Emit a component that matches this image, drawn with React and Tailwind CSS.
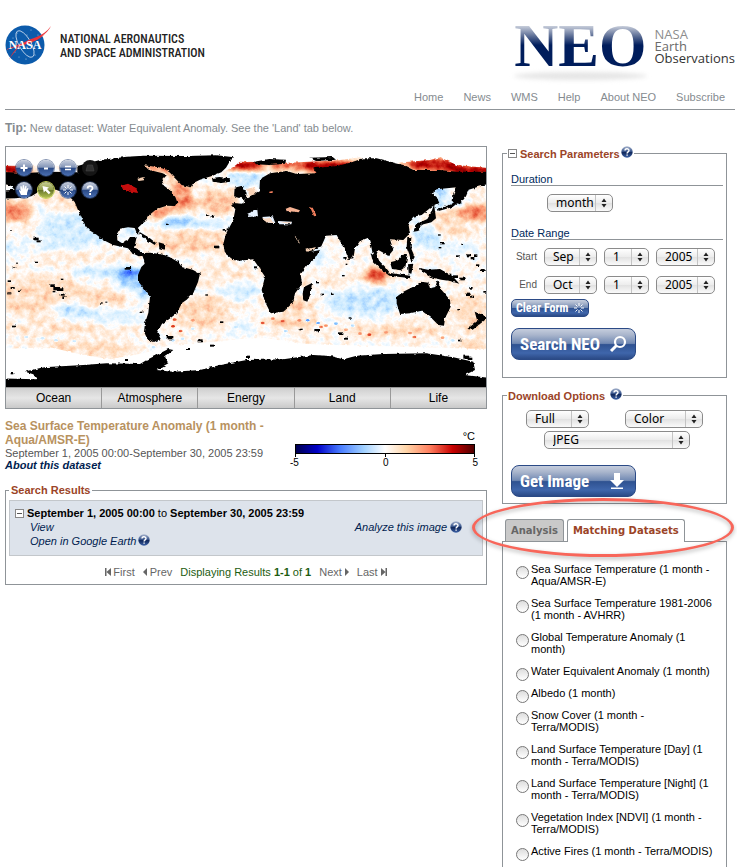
import React, { useState } from "react";

const navLinks = ["Home", "News", "WMS", "Help", "About NEO", "Subscribe"];
const categories = ["Ocean", "Atmosphere", "Energy", "Land", "Life"];
const months = ["Jan", "Feb", "Mar", "Apr", "May", "Jun", "Jul", "Aug", "Sep", "Oct", "Nov", "Dec"];
const days = Array.from({ length: 31 }, (_, i) => String(i + 1));
const years = ["2002", "2003", "2004", "2005", "2006", "2007"];

const datasets = [
  "Sea Surface Temperature (1 month - Aqua/AMSR-E)",
  "Sea Surface Temperature 1981-2006 (1 month - AVHRR)",
  "Global Temperature Anomaly (1 month)",
  "Water Equivalent Anomaly (1 month)",
  "Albedo (1 month)",
  "Snow Cover (1 month - Terra/MODIS)",
  "Land Surface Temperature [Day] (1 month - Terra/MODIS)",
  "Land Surface Temperature [Night] (1 month - Terra/MODIS)",
  "Vegetation Index [NDVI] (1 month - Terra/MODIS)",
  "Active Fires (1 month - Terra/MODIS)",
];

// anomaly field: cx, cy, rx, ry, grey level (80 = neutral, higher = warmer)
const anomalies = [
  [20, 195, 70, 28, "#b8b8b8"],
  [170, 165, 110, 30, "#929292"],
  [210, 250, 110, 55, "#6a6a6a"],
  [60, 300, 90, 25, "#747474"],
  [110, 190, 40, 20, "#747474"],
  [250, 340, 160, 16, "#8e8e8e"],
  [300, 372, 110, 16, "#606060"],
  [375, 385, 40, 24, "#282828"],
  [395, 425, 66, 34, "#606060"],
  [110, 450, 150, 60, "#949494"],
  [300, 450, 90, 22, "#959595"],
  [195, 488, 60, 20, "#5e5e5e"],
  [310, 510, 110, 24, "#707070"],
  [180, 545, 190, 18, "#909090"],
  [250, 605, 150, 20, "#989898"],
  [470, 68, 60, 16, "#b8b8b8"],
  [520, 150, 40, 50, "#b0b0b0"],
  [545, 165, 24, 18, "#bcbcbc"],
  [640, 165, 60, 34, "#a2a2a2"],
  [460, 198, 30, 12, "#cccccc"],
  [515, 225, 55, 18, "#484848"],
  [620, 232, 70, 18, "#6c6c6c"],
  [560, 285, 130, 34, "#999999"],
  [370, 255, 30, 14, "#626262"],
  [660, 380, 90, 30, "#8c8c8c"],
  [700, 430, 60, 30, "#707070"],
  [590, 480, 90, 24, "#999999"],
  [600, 525, 100, 14, "#9e9e9e"],
  [700, 540, 50, 14, "#666666"],
  [720, 92, 60, 28, "#646464"],
  [720, 54, 60, 12, "#ffffff"],
  [20, 66, 60, 14, "#ffffff"],
  [870, 52, 100, 16, "#c8c8c8"],
  [980, 60, 90, 16, "#ffffff"],
  [1280, 52, 90, 18, "#eeeeee"],
  [1400, 70, 80, 14, "#ffffff"],
  [930, 330, 30, 34, "#6c6c6c"],
  [1010, 400, 80, 30, "#8a8a8a"],
  [1080, 465, 130, 44, "#666666"],
  [1114, 385, 34, 18, "#dcdcdc"],
  [875, 475, 40, 16, "#a4a4a4"],
  [1210, 215, 30, 14, "#6c6c6c"],
  [1400, 195, 60, 26, "#b8b8b8"],
  [1320, 205, 50, 14, "#a2a2a2"],
  [1330, 172, 60, 12, "#585858"],
  [1300, 137, 18, 10, "#202020"],
  [1265, 270, 40, 30, "#606060"],
  [1340, 245, 60, 18, "#949494"],
  [1350, 305, 80, 22, "#747474"],
  [1340, 480, 20, 40, "#909090"],
  [1400, 500, 50, 60, "#949494"],
  [1180, 552, 160, 14, "#9c9c9c"],
  [860, 530, 80, 14, "#a2a2a2"],
  [1400, 595, 50, 12, "#a0a0a0"],
];

// small eddies along the southern fronts
const eddies = [
  [506, 518, "#f0f0f0"], [501, 538, "#ffffff"], [524, 552, "#f0f0f0"], [560, 520, "#cccccc"],
  [905, 520, "#101010"], [936, 528, "#101010"], [945, 540, "#e0e0e0"], [960, 536, "#dddddd"],
  [990, 530, "#303030"], [880, 520, "#d0d0d0"], [830, 522, "#d0d0d0"], [800, 515, "#cccccc"],
  [770, 528, "#dddddd"], [840, 552, "#505050"], [1040, 536, "#505050"], [1062, 560, "#d0d0d0"],
  [1090, 563, "#f0f0f0"], [1140, 556, "#c0c0c0"], [1212, 558, "#d0d0d0"], [1225, 570, "#e8e8e8"],
  [1310, 572, "#d0d0d0"], [1340, 580, "#585858"], [443, 600, "#505050"], [60, 570, "#585858"],
  [110, 574, "#585858"], [150, 580, "#505050"], [205, 582, "#5c5c5c"], [500, 580, "#505050"],
  [530, 575, "#585858"], [560, 545, "#505050"], [690, 540, "#505050"], [1020, 548, "#cccccc"],
];

const islands = [
  [82, 272, 8], [92, 280, 6], [12, 247, 3], [20, 358, 4], [30, 347, 3], [85, 344, 4], [5, 400, 5],
  [14, 420, 6], [4, 436, 6], [36, 428, 4], [130, 412, 8], [142, 420, 10], [156, 424, 8], [164, 440, 6],
  [172, 448, 5], [140, 432, 4], [282, 466, 4], [298, 464, 3], [356, 360, 8], [164, 395, 4], [18, 536, 5],
  [404, 494, 4], [480, 230, 4], [600, 202, 5], [614, 206, 6], [650, 246, 5], [662, 244, 6], [624, 296, 8],
  [482, 567, 10], [572, 577, 9], [612, 593, 6], [540, 603, 6], [357, 636, 6], [718, 626, 7], [642, 523, 5],
  [598, 442, 4], [880, 545, 5], [925, 546, 7], [996, 556, 8], [1014, 572, 6], [1028, 511, 4], [944, 440, 5],
  [930, 405, 4], [975, 440, 4], [1008, 384, 4], [1012, 330, 5], [1016, 350, 4], [744, 358, 6], [1302, 285, 7],
  [1298, 300, 4], [1350, 325, 5], [1382, 322, 6], [1394, 330, 7], [1404, 322, 5], [1410, 352, 5], [1424, 366, 6],
  [1366, 290, 4], [1354, 486, 4], [1356, 578, 5], [1392, 446, 6], [1380, 440, 7], [1432, 430, 7], [1390, 420, 5],
  [1340, 385, 8], [1360, 392, 8], [1320, 380, 8], [1372, 626, 9], [1385, 632, 7], [1296, 262, 4], [14, 678, 4],
];

const buttonBlue =
  "bg-[linear-gradient(to_bottom,#c5cddd_0%,#a9b5cc_20%,#7189b3_48%,#2f5291_52%,#3f66ab_80%,#2b4a86_100%)]";
const narrow = "font-['Liberation_Sans_Narrow','Roboto_Condensed','Liberation_Sans',sans-serif]";

function WorldMap() {
  return (
    <svg viewBox="0 0 1440 720" className="block w-full bg-white" role="img" aria-label="Sea surface temperature anomaly map">
      <defs>
        <filter id="soft" x="-50%" y="-50%" width="200%" height="200%">
          <feGaussianBlur stdDeviation="11" />
        </filter>
        <filter id="ramp" x="0" y="0" width="1440" height="720" filterUnits="userSpaceOnUse" colorInterpolationFilters="sRGB">
          <feTurbulence type="fractalNoise" baseFrequency="0.045" numOctaves="4" seed="7" />
          <feColorMatrix values="1 0 0 0 0  1 0 0 0 0  1 0 0 0 0  0 0 0 0 1" result="noise" />
          <feComposite in="SourceGraphic" in2="noise" operator="arithmetic" k1="0" k2="1" k3="0.22" k4="-0.11" />
          <feComponentTransfer>
            <feFuncR type="table" tableValues="0 0 0.25 0.5 0.8 1 1 0.98 0.88 0.7 0.35" />
            <feFuncG type="table" tableValues="0 0.05 0.45 0.74 0.92 1 0.85 0.6 0.28 0 0" />
            <feFuncB type="table" tableValues="0.4 0.85 1 1 1 1 0.72 0.45 0.18 0 0" />
          </feComponentTransfer>
        </filter>
        <filter id="coast" x="0" y="0" width="1440" height="720" filterUnits="userSpaceOnUse">
          <feTurbulence type="fractalNoise" baseFrequency="0.09" numOctaves="2" seed="3" />
          <feDisplacementMap in="SourceGraphic" scale="9" xChannelSelector="R" yChannelSelector="G" />
        </filter>
      </defs>

      <g filter="url(#ramp)">
        <rect width="1440" height="720" fill="#848484" />
        <g filter="url(#soft)">
          {anomalies.map(([cx, cy, rx, ry, fill]) => (
            <ellipse key={`${cx}-${cy}`} cx={cx} cy={cy} rx={rx} ry={ry} fill={fill} />
          ))}
        </g>
        {eddies.map(([cx, cy, fill]) => (
          <ellipse key={`${cx}-${cy}`} cx={cx} cy={cy} rx="6" ry="4" fill={fill} opacity="0.6" />
        ))}
      </g>

      {/* sea ice */}
      <g fill="#fff" filter="url(#coast)">
        <path d="M-20-20H1460V64L1352 54L1302 31L1272 39L1172 47L1062 31L1002 39L852 47L702 44L682 60L642 79L600 40L232 57L-20 56Z" />
        <path d="M-20 606L132 601L232 624L312 637L412 619L492 594L622 584L722 574L782 574L902 591L1102 597L1262 601L1460 607V740H-20Z" />
      </g>

      {/* land */}
      <g fill="#000" filter="url(#coast)">
        <path d="M-20 74L60 78L130 74L214 76L214 57L250 47L282 39L362 29L412 26L542 27L632 25L684 31L672 42L660 62L646 76L620 86L582 98L562 108L554 121L527 114L507 94L492 77L476 66L452 60L414 55L428 68L470 79L482 85L468 100L474 116L492 130L508 150L514 166L507 177L482 176L452 186L430 204L422 220L407 232L396 242L402 262L394 262L386 243L366 241L342 245L333 260L334 280L347 288L364 282L372 270L392 270L388 288L384 302L408 314L414 326L398 328L378 318L366 304L322 294L292 279L270 262L250 250L240 238L232 224L218 194L206 165L182 140L150 128L126 126L102 132L76 148L30 154L-20 155V132L26 128L14 116L-20 106Z" />
        <path d="M406 318L432 317L462 321L490 330L517 345L527 359L560 368L582 380L576 405L562 438L542 458L528 468L512 499L487 518L468 530L454 556L464 576L444 585L424 576L414 554L417 528L427 498L432 450L416 428L396 402L396 384L406 360L416 350L412 334Z" />
        <path d="M402 256L430 272L450 288L446 294L424 280L402 262ZM458 286L478 292L476 308L460 304Z" />
        <path d="M618 93L640 90L672 94L672 104L646 108L620 104ZM686 122L708 116L722 138L718 158L700 152L684 148Z" />
        <path d="M744 44L790 36L840 38L838 50L790 54L750 52ZM910 32L980 30L990 38L930 42Z" />
        <path d="M682 219L688 186L676 176L680 168L712 170L716 156L742 142L760 132L762 96L792 79L842 72L872 81L932 79L922 64L992 57L1032 47L1072 34L1112 34L1152 44L1192 54L1222 69L1302 69L1352 74L1460 74V108L1417 119L1388 128L1380 148L1362 172L1340 164L1342 142L1352 121L1322 124L1292 127L1277 139L1292 150L1300 168L1277 179L1247 204L1222 209L1207 229L1212 259L1192 279L1152 277L1162 309L1147 327L1132 317L1117 309L1112 322L1122 349L1102 329L1096 300L1087 272L1062 282L1047 304L1042 334L1028 336L1018 312L1002 282L992 264L960 266L946 298L916 314L942 309L926 336L904 354L884 382L888 412L867 439L862 464L844 484L832 494L794 499L777 464L767 429L777 389L762 366L742 337L702 341L682 339L657 319L652 290L660 260Z" />
        <path d="M894 420L918 408L914 440L904 464L892 460L890 440Z" />
        <path d="M1094 318L1108 330L1138 360L1152 378L1212 386L1214 394L1150 386L1126 368L1100 342ZM1152 346L1176 340L1198 318L1204 328L1198 360L1184 370L1158 366ZM1206 352L1222 350L1216 380L1208 378ZM1204 270L1216 270L1214 300L1226 330L1216 348L1210 322L1202 300ZM1236 362L1266 368L1302 366L1340 388L1360 410L1332 402L1306 398L1280 392L1262 380Z" />
        <path d="M1172 449L1192 434L1232 414L1247 404L1267 407L1272 424L1288 420L1294 400L1307 429L1332 459L1334 479L1317 514L1314 536L1297 534L1277 514L1247 491L1212 499L1182 501L1172 469Z" />
        <path d="M1406 494L1440 508L1436 520L1400 548L1384 546L1414 522Z" />
        <path d="M1376 150L1340 180L1298 192L1296 186L1336 172L1368 146ZM1284 172L1290 214L1276 226L1244 234L1236 252L1222 254L1230 232L1264 216L1276 196Z" />
        <path d="M-20 694L92 697L82 682L57 674L112 661L232 654L302 649L402 651L422 639L462 619L487 606L502 609L477 629L487 649L452 669L502 674L582 669L642 654L722 639L832 637L922 624L972 627L1012 637L1052 626L1132 621L1262 619L1342 631L1402 644L1407 669L1377 684L1460 694V740H-20Z" />
        {islands.map(([x, y, s]) => (
          <rect key={`${x}-${y}`} x={x} y={y} width={s * 2} height={s} />
        ))}
      </g>

      {/* inland seas */}
      <g filter="url(#coast)">
        <path d="M346 116L366 110L392 124L396 138L372 134L350 126Z" fill="#c40f0f" />
        <path d="M392 96L416 90L414 100L398 102Z" fill="#f4cdb0" />
        <path d="M722 126L748 120L748 142L730 146Z" fill="#fbd5b8" />
        <path d="M724 200L754 188L756 208L724 210ZM768 210L800 208L808 228L788 228ZM816 222L858 224L856 232L820 232Z" fill="#e6f1ff" />
        <path d="M768 216L792 212L802 228L782 226ZM820 224L856 226L850 231Z" fill="#fbd9c0" />
        <path d="M838 186L852 180L882 190L878 196L842 192Z" fill="#f6b293" />
        <path d="M912 180L920 182L932 206L924 208ZM790 134L800 132L800 138L790 138Z" fill="#ef7d5c" />
        <path d="M866 266L874 272L882 290L876 286ZM898 308L930 300L924 308L902 314Z" fill="#fbd5b8" />
      </g>
    </svg>
  );
}

function NasaLogo() {
  return (
    <svg width="48" height="42" viewBox="0 0 48 42" role="img" aria-label="NASA">
      <circle cx="20" cy="21" r="19.500" fill="#0c5bab" />
      <g fill="#fff" opacity="0.7">
        <circle cx="12" cy="9" r="0.600" /><circle cx="26" cy="6" r="0.500" /><circle cx="30" cy="31" r="0.600" />
        <circle cx="14" cy="33" r="0.500" /><circle cx="21" cy="35" r="0.600" /><circle cx="8" cy="14" r="0.500" />
        <circle cx="33" cy="11" r="0.500" /><circle cx="22" cy="11" r="0.500" /><circle cx="10" cy="28" r="0.500" />
      </g>
      <ellipse cx="20" cy="20" rx="6" ry="15" transform="rotate(-30 20 20)" fill="none" stroke="#c9daee" strokeWidth="0.800" />
      <path d="M46 2C40 14 28 15 17 21C11 25 7 31 4 36C7 29 12 23 18 19C28 13 38 13 46 2Z" fill="#ee3338" />
      <path d="M0 26C10 21 28 17 40 10C32 19 14 22 0 26Z" fill="#ee3338" />
      <text x="20" y="25" textAnchor="middle" fontFamily="Liberation Serif, serif" fontWeight="700" fontSize="12" fill="#fff">NASA</text>
    </svg>
  );
}

function HelpIcon({ label }) {
  return (
    <a href="#help" aria-label={label} className="inline-block align-top">
      <svg width="12" height="12" viewBox="0 0 12 12" className="block">
        <defs>
          <linearGradient id="helpFill" x1="0" y1="0" x2="0" y2="1">
            <stop offset="0" stopColor="#a9b6cf" />
            <stop offset="0.450" stopColor="#38558c" />
            <stop offset="0.550" stopColor="#10285c" />
            <stop offset="1" stopColor="#3d63a8" />
          </linearGradient>
        </defs>
        <circle cx="6" cy="6" r="5.700" fill="url(#helpFill)" />
        <path d="M4 4.600C4 2.200 8 2.200 8 4.500C8 5.900 6.100 5.800 6.100 7.400M6.100 8.500V9.800" fill="none" stroke="#fff" strokeWidth="1.400" />
      </svg>
    </a>
  );
}

function Collapse({ label }) {
  return (
    <button type="button" aria-label={label} className="flex h-[9px] w-[9px] items-center justify-center border border-[#888] bg-white">
      <span className="h-px w-[5px] bg-[#555]" />
    </button>
  );
}

const toolIcons = {
  "Zoom in": <path d="M8 4.500V11.500M4.500 8H11.500" stroke="#fff" strokeWidth="2" />,
  "Zoom out": <path d="M6 8.500H10" stroke="#fff" strokeWidth="2" />,
  "Full view": <path d="M5 6.500H11M5 9.500H11" stroke="#fff" strokeWidth="1.600" />,
  Layers: <path d="M5.500 5H10.500L12 11H4Z" fill="#303030" stroke="#444" strokeWidth="0.600" />,
  Pan: <path d="M5 13L2.800 8.500Q3 7.300 4.500 9L4.300 4.500Q5.200 3.400 5.800 4.700L6.200 7L6.700 3.400Q7.600 2.400 8.200 3.600L8.300 7L9.300 4Q10.300 3.200 10.600 4.400L10.300 7.600L11.500 6Q12.800 5.700 12.300 7L11 11V13Z" fill="#fff" />,
  Select: <path d="M4.500 4L11 5.500L9 7L12.500 10.500L10.800 12.200L7.300 8.700L5.800 10.500Z" fill="#fff" />,
  Clear: <path d="M8 3V6M8 10V13M3 8H6M10 8H13M4.500 4.500L6.500 6.500M9.500 9.500L11.500 11.500M4.500 11.500L6.500 9.500M9.500 6.500L11.500 4.500" stroke="#fff" strokeWidth="1" />,
  Help: <path d="M5.600 6.400C5.600 3.300 10.600 3.400 10.500 6.200C10.500 8 8.100 7.900 8.100 9.900M8.100 11V13" fill="none" stroke="#fff" strokeWidth="1.800" />,
};

const toolFills = {
  Layers: "bg-[#151515]",
  Select: "bg-[linear-gradient(to_bottom,#c9cf94,#8f9c48_50%,#68762b_52%,#b5c452)] ring-1 ring-[#c9d458]",
};
const blueBall = "bg-[linear-gradient(to_bottom,#c8cfdd,#8496b8_45%,#2b4b87_52%,#4b70b3)] ring-1 ring-[#2f4879]/60";

function NeoSelect({ label, options, value, className }) {
  return (
    <span className={`relative inline-flex h-[18px] ${className}`}>
      <select
        aria-label={label}
        defaultValue={value}
        className="h-full w-full appearance-none rounded-[5px] border border-[#8b8b8b] bg-[linear-gradient(to_bottom,#fff,#ececec_50%,#e2e2e2_52%,#fafafa)] pl-2 font-['Noto_Sans',sans-serif] text-[12px] leading-4 text-black"
      >
        {options.map((option) => (
          <option key={option}>{option}</option>
        ))}
      </select>
      <svg width="18" height="16" viewBox="0 0 18 16" className="pointer-events-none absolute top-px right-0">
        <path d="M0.500 0V16" stroke="#c4c4c4" />
        <path d="M9 3.500L11.500 7H6.500ZM9 12.500L11.500 9H6.500Z" fill="#222" />
      </svg>
    </span>
  );
}

export default function App() {
  const [dataset, setDataset] = useState("");
  const [tool, setTool] = useState("Select");

  return (
    <div className="pl-[5px] font-['Liberation_Sans',Arial,sans-serif] text-[11px] leading-3 text-black">
      {/* Header */}
      <header className="mr-[2px] border-b border-[#8f9498] pt-6">
        <div className="flex items-start justify-between">
          <a href="#nasa" className="flex items-start gap-[7px]">
            <NasaLogo />
            <span className={`pt-2 text-[12px] leading-[14px] font-medium text-[#222] ${narrow}`}>
              <span className="block">NATIONAL AERONAUTICS</span>
              <span className="block">AND SPACE ADMINISTRATION</span>
            </span>
          </a>
          <a href="#neo" className="flex items-start gap-2">
            <span className="flex flex-col items-center">
              <span className="bg-[linear-gradient(to_bottom,#c5cbd9_5%,#5a6c94_28%,#001d5c_48%)] bg-clip-text font-['Liberation_Serif',serif] text-[61px] leading-[44px] font-bold text-transparent">
                NEO
              </span>
              <span className="mt-1 h-2 w-full rounded-[50%] bg-[#e6e6e6] blur-[2px]" />
            </span>
            <span className="pt-1 font-['Open_Sans',sans-serif] text-[13px] leading-3 text-[#8d8d8d]">
              <span className="block">NASA</span>
              <span className="block text-[#6a6a6a]">Earth</span>
              <span className="block text-[#333]">Observations</span>
            </span>
          </a>
        </div>
        <nav className="mt-[11px] flex justify-end gap-5 pr-[10px] pb-[6px] text-[#858b90]">
          {navLinks.map((link) => (
            <a key={link} href={`#${link}`}>{link}</a>
          ))}
        </nav>
      </header>

      <p className="pt-[11px] pb-[11px] leading-[14px] text-[#858b90]">
        <b className="text-[12px]">Tip:</b> New dataset: Water Equivalent Anomaly. See the 'Land' tab below.
      </p>

      <div className="flex items-start gap-[15px] pr-[10px]">
        {/* Left column */}
        <main className="min-w-0 flex-1">
          <section className="relative border border-[#8f9498]">
            <WorldMap />
            <div className="absolute top-[13px] left-[10px] grid grid-cols-4 gap-[6px]">
              {Object.keys(toolIcons).map((name) => (
                <button
                  key={name}
                  type="button"
                  aria-label={name}
                  aria-pressed={tool === name}
                  onClick={() => setTool(name)}
                  className={`h-4 w-4 rounded-full ${toolFills[name] || blueBall}`}
                >
                  <svg width="16" height="16" viewBox="0 0 16 16" className="block">{toolIcons[name]}</svg>
                </button>
              ))}
            </div>
            <div className="flex divide-x divide-[#999] border-t border-[#999] bg-[linear-gradient(to_bottom,#cfcfcf,#e6e6e6_50%,#c9c9c9)]">
              {categories.map((name) => (
                <button key={name} type="button" className="h-5 flex-1 basis-0 text-[12px] leading-5">
                  {name}
                </button>
              ))}
            </div>
          </section>

          <section className="mt-[10px] flex items-start justify-between">
            <div>
              <h1 className="max-w-[270px] text-[12px] leading-[14px] font-bold text-[#b8925f]">
                Sea Surface Temperature Anomaly (1 month - Aqua/AMSR-E)
              </h1>
              <p className="text-[#555]">September 1, 2005 00:00-September 30, 2005 23:59</p>
              <a href="#about" className="font-bold text-[#001d50] italic">About this dataset</a>
            </div>
            <div className="mt-[11px] mr-[7px] w-[190px]">
              <div className="pr-[5px] text-right">°C</div>
              <div className="mx-[5px] mt-[2px] h-[10px] border border-black bg-[linear-gradient(to_right,#000050,#0000c8_12%,#4a7dff_25%,#a0d0ff_38%,#fff_50%,#ffd5a8_62%,#ff8060_75%,#c80000_88%,#500000)]" />
              <div className="mx-[5px] flex h-[3px] justify-between">
                <span className="w-px bg-black" />
                <span className="w-px bg-black" />
                <span className="w-px bg-black" />
              </div>
              <div className="flex justify-between pr-[2px] text-[10px]">
                <span>-5</span>
                <span>0</span>
                <span>5</span>
              </div>
            </div>
          </section>

          <fieldset className="mt-[13px] border border-[#8f9498] px-[3px]">
            <legend className="px-[2px] font-bold text-[#9b4427]">Search Results</legend>
            <div className="mt-1 flex justify-between border border-[#c3c7cb] bg-[#dde3eb] px-[5px] pt-[5px] pb-[7px]">
              <div>
                <div className="flex items-center gap-[3px] leading-[14px]">
                  <Collapse label="Collapse result" />
                  <span><b>September 1, 2005 00:00</b> to <b>September 30, 2005 23:59</b></span>
                </div>
                <div className="flex flex-col items-start pl-[15px] leading-[14px] text-[#001d50] italic">
                  <a href="#view">View</a>
                  <span className="flex gap-[2px]"><a href="#earth">Open in Google Earth</a><HelpIcon label="Google Earth help" /></span>
                </div>
              </div>
              <div className="flex gap-[3px] self-center pr-[15px] text-[#001d50] italic">
                <a href="#analyze">Analyze this image</a>
                <HelpIcon label="Analyze help" />
              </div>
            </div>
            <div className="flex justify-center gap-2 pt-[10px] pb-[6px] text-[#666]">
              <a href="#first" className="flex items-center gap-[2px]">
                <svg width="6" height="8" viewBox="0 0 6 8"><path d="M0 0H1.500V8H0ZM6 0V8L1.500 4Z" fill="#666" /></svg>
                First
              </a>
              <a href="#prev" className="flex items-center gap-[3px]">
                <svg width="4" height="8" viewBox="0 0 4 8"><path d="M4 0V8L0 4Z" fill="#666" /></svg>
                Prev
              </a>
              <span className="text-[#1d5c10]">Displaying Results <b>1-1</b> of <b>1</b></span>
              <a href="#next" className="flex items-center gap-[3px]">
                Next
                <svg width="4" height="8" viewBox="0 0 4 8"><path d="M0 0V8L4 4Z" fill="#666" /></svg>
              </a>
              <a href="#last" className="flex items-center gap-[3px]">
                Last
                <svg width="6" height="8" viewBox="0 0 6 8"><path d="M6 0H4.500V8H6ZM0 0V8L4.500 4Z" fill="#666" /></svg>
              </a>
            </div>
          </fieldset>
        </main>

        {/* Right column */}
        <aside className="w-[225px] shrink-0">
          <fieldset className="border border-[#8f9498] pr-[3px] pb-[17px] pl-2">
            <legend className="-ml-1 flex h-[15px] gap-px px-px font-bold text-[#9b4427]">
              <span className="flex items-center gap-[3px]"><Collapse label="Collapse search parameters" />Search Parameters</span>
              <HelpIcon label="Search parameters help" />
            </legend>
            <h2 className="mt-3 border-b border-[#8f9498] leading-3 text-[#002a5c]">Duration</h2>
            <div className="mt-2 pl-9">
              <NeoSelect label="Duration" options={["month", "week", "day"]} value="month" className="w-[66px]" />
            </div>
            <h2 className="mt-[15px] border-b border-[#8f9498] leading-3 text-[#002a5c]">Date Range</h2>
            <div className="mt-2 flex flex-col gap-[10px]">
              <div className="flex items-center gap-[7px]">
                <span className="w-[26px] text-right text-[10px] text-[#555]">Start</span>
                <NeoSelect label="Start month" options={months} value="Sep" className="w-[53px]" />
                <NeoSelect label="Start day" options={days} value="1" className="w-[45px]" />
                <NeoSelect label="Start year" options={years} value="2005" className="w-[59px]" />
              </div>
              <div className="flex items-center gap-[7px]">
                <span className="w-[26px] text-right text-[10px] text-[#555]">End</span>
                <NeoSelect label="End month" options={months} value="Oct" className="w-[53px]" />
                <NeoSelect label="End day" options={days} value="1" className="w-[45px]" />
                <NeoSelect label="End year" options={years} value="2005" className="w-[59px]" />
              </div>
            </div>
            <button type="button" className={`mt-[5px] flex h-[18px] w-[78px] items-center justify-between rounded-[5px] border border-[#2b4a86] px-1 text-[12px] font-bold text-white ${buttonBlue} ${narrow}`}>
              Clear Form
              <svg width="10" height="10" viewBox="3 3 10 10">{toolIcons.Clear}</svg>
            </button>
            <button type="submit" className={`mt-[11px] flex h-8 w-[125px] items-center justify-between rounded-[8px] border border-[#2b4a86] px-2 text-[17px] font-bold text-white ${buttonBlue} ${narrow}`}>
              Search NEO
              <svg width="18" height="18" viewBox="0 0 18 18" fill="none" stroke="#fff">
                <circle cx="11" cy="7" r="5" strokeWidth="2.200" />
                <path d="M7.500 10.500L2 16" strokeWidth="3" />
              </svg>
            </button>
          </fieldset>

          <fieldset className="mt-[10px] border border-[#8f9498] px-2 pb-[6px]">
            <legend className="-ml-1 flex h-[15px] gap-[5px] px-px font-bold text-[#9b4427]">
              <span className="leading-[16px]">Download Options</span>
              <HelpIcon label="Download options help" />
            </legend>
            <div className="mt-[7px] flex justify-between pr-[15px] pl-[15px]">
              <NeoSelect label="Size" options={["Full", "Half"]} value="Full" className="w-[63px]" />
              <NeoSelect label="Palette" options={["Color", "Grayscale"]} value="Color" className="w-[78px]" />
            </div>
            <div className="mt-[3px] pl-[33px]">
              <NeoSelect label="Format" options={["JPEG", "PNG", "GeoTIFF"]} value="JPEG" className="w-[146px]" />
            </div>
            <button type="button" className={`mt-4 flex h-8 w-[125px] items-center justify-between rounded-[8px] border border-[#2b4a86] px-2 text-[17px] font-bold text-white ${buttonBlue} ${narrow}`}>
              Get Image
              <svg width="20" height="18" viewBox="0 0 20 18" fill="#fff">
                <path d="M7 1H13V8H17L10 15L3 8H7ZM4 15.500H16V17H4Z" />
              </svg>
            </button>
          </fieldset>

          <section className="relative mt-[15px]">
            <div className="flex gap-[3px] pl-[3px] font-['DejaVu_Sans',sans-serif] text-[10px] font-bold">
              <button type="button" className="h-[22px] rounded-t-[3px] border border-b-0 border-[#8f9498] bg-[#c9c9c9] px-[5px] text-[#666]">
                Analysis
              </button>
              <button type="button" className="relative z-10 -mb-px h-[23px] rounded-t-[3px] border border-b-0 border-[#8f9498] bg-white px-[5px] text-[#9b4427]">
                Matching Datasets
              </button>
            </div>
            <ul className="border border-b-0 border-[#8f9498] pt-[21px] pr-3 pl-[13px]">
              {datasets.map((name) => (
                <li key={name} className="pb-[10px]">
                  <label className="flex items-start gap-[2px]">
                    <input
                      type="radio"
                      name="dataset"
                      value={name}
                      checked={dataset === name}
                      onChange={(e) => setDataset(e.target.value)}
                      className="mt-[3px] -mb-1 h-[13px] w-[13px] shrink-0 appearance-none rounded-full border border-[#777] bg-[linear-gradient(to_bottom,#ddd,#fff)] checked:bg-[#3f66ab]"
                    />
                    <span>{name}</span>
                  </label>
                </li>
              ))}
            </ul>
            {/* highlight ring around the tabs */}
            <div className="pointer-events-none absolute -top-[21px] -right-[7px] -left-[30px] z-20 h-[59px] rounded-[50%] border-[3px] border-[#f8665a] drop-shadow-[0_2px_2px_rgba(0,0,0,0.3)]" />
          </section>
        </aside>
      </div>
    </div>
  );
}
